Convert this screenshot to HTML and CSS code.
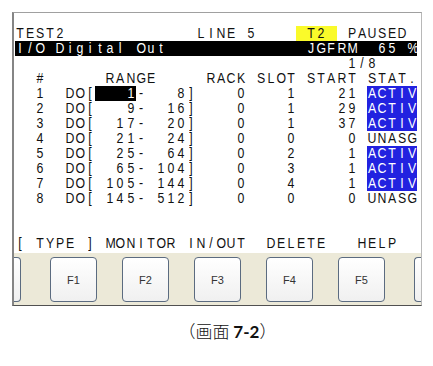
FILE: index.html
```html
<!DOCTYPE html>
<html lang="zh-CN">
<head>
    <meta charset="UTF-8">
    <meta name="viewport" content="width=device-width, initial-scale=1.0">
    <title>I/O Digital Out</title>
    <link rel="stylesheet" href="styles.css">
</head>
<body>
    <div class="screen">
        <div class="lcd">
            <div class="ln">TEST2             LINE 5    <span class="mode"> T2 </span> PAUSED</div>
            <div class="ln bar">I/O Digital Out              JGFRM  65 %</div>
            <div class="ln">                                 1/8</div>
            <div class="ln">  #      RANGE     RACK SLOT START STAT.</div>
            <div class="ln">  1  DO[<span class="cur">   1</span>-   8]    0    1    21 <span class="act">ACTIV</span></div>
            <div class="ln">  2  DO[   9-  16]    0    1    29 <span class="act">ACTIV</span></div>
            <div class="ln">  3  DO[  17-  20]    0    1    37 <span class="act">ACTIV</span></div>
            <div class="ln">  4  DO[  21-  24]    0    0     0 UNASG</div>
            <div class="ln">  5  DO[  25-  64]    0    2     1 <span class="act">ACTIV</span></div>
            <div class="ln">  6  DO[  65- 104]    0    3     1 <span class="act">ACTIV</span></div>
            <div class="ln">  7  DO[ 105- 144]    0    4     1 <span class="act">ACTIV</span></div>
            <div class="ln">  8  DO[ 145- 512]    0    0     0 UNASG</div>
            <div class="ln"> </div>
            <div class="ln"> </div>
            <div class="ln">[ TYPE ] MONITOR IN/OUT  DELETE   HELP</div>
        </div>
        <div class="fkeys">
            <div class="key-edge left"></div>
            <div class="keys">
                <div class="key">F1</div>
                <div class="key">F2</div>
                <div class="key">F3</div>
                <div class="key">F4</div>
                <div class="key">F5</div>
            </div>
            <div class="key-edge right"></div>
        </div>
    </div>
    <p class="caption">（画面 <b>7-2</b>）</p>

    <script>
        // Put every character of the pendant text into its own fixed-width cell
        document.querySelectorAll('.lcd .ln').forEach(function (line) {
            const walker = document.createTreeWalker(line, NodeFilter.SHOW_TEXT);
            const nodes = [];
            while (walker.nextNode()) nodes.push(walker.currentNode);
            nodes.forEach(function (node) {
                const frag = document.createDocumentFragment();
                for (const ch of node.textContent) {
                    const cell = document.createElement('span');
                    cell.className = 'c';
                    cell.textContent = ch;
                    frag.appendChild(cell);
                }
                node.parentNode.replaceChild(frag, node);
            });
        });
    </script>
</body>
</html>
```

FILE: styles.css
```css
body {
    margin: 0;
    background: #fff;
    font-family: "Liberation Sans", Arial, sans-serif;
}
.screen {
    box-sizing: border-box;
    width: 410px;
    margin: 12px 0 0 12px;
    border-top: 1px solid #a0a0a0;
    border-left: 2px solid #858585;
    border-right: 1px solid #b8b8b8;
    border-bottom: 1px solid #505050;
}
.lcd {
    padding: 13px 0 2px 1px;
    font-size: 14px;
    line-height: 15px;
    color: #111;
}
.ln {
    display: flex;
    height: 15px;
    white-space: pre;
}
.c {
    flex: none;
    width: 10.06px;
    text-align: center;
    transform: scaleX(0.88);
}
.bar {
    width: 402px;
    background: #000;
    color: #fff;
}
.mode {
    display: flex;
    background: #fafa2a;
}
.cur {
    display: flex;
    background: #000;
    color: #fff;
}
.act {
    display: flex;
    background: #2222e0;
    color: #fff;
}
.fkeys {
    display: flex;
    box-sizing: border-box;
    height: 52px;
    padding-top: 4px;
    background: #ece9d8;
}
.keys {
    display: flex;
    gap: 25px;
    margin-left: 29px;
}
.key, .key-edge {
    box-sizing: border-box;
    height: 45px;
    border: 1px solid #5b6b80;
    background: linear-gradient(#ffffff, #f0f0f0);
}
.key {
    display: flex;
    align-items: center;
    justify-content: center;
    width: 47px;
    border-radius: 4px;
    font-size: 11px;
    color: #333;
}
.key-edge {
    width: 7px;
}
.key-edge.left {
    border-left: none;
    border-radius: 0 4px 4px 0;
}
.key-edge.right {
    margin-left: auto;
    border-right: none;
    border-radius: 4px 0 0 4px;
}
.caption {
    margin: 14px 0 0;
    padding-left: 22px;
    text-align: center;
    font-family: "Noto Sans CJK SC", sans-serif;
    font-size: 17px;
    line-height: 22px;
    font-weight: 300;
    color: #111;
}
.caption b {
    font-family: Lato, "Liberation Sans", sans-serif;
    font-weight: bold;
}
```
